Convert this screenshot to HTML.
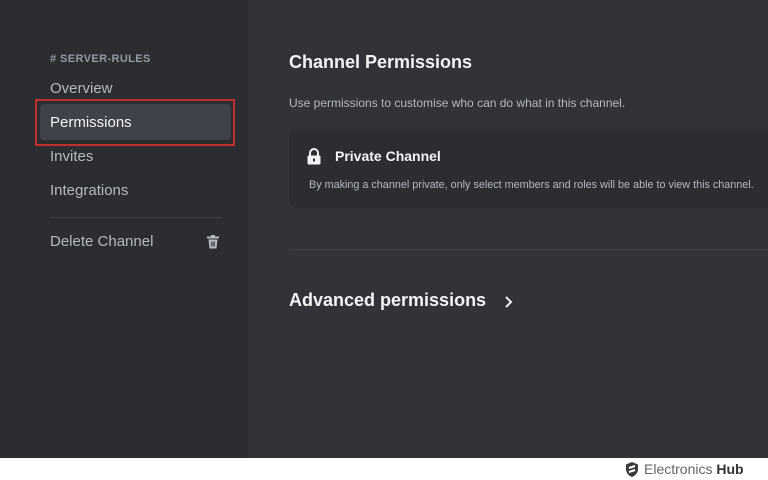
<!DOCTYPE html>
<html><head><style>
body{margin:0;width:768px;height:480px;overflow:hidden;font-family:"Liberation Sans",sans-serif;background:#fff;position:relative}
.side{position:absolute;left:0;top:0;width:248px;height:458px;background:#2b2d31}
.main{position:absolute;left:248px;top:0;width:520px;height:458px;background:#313338}
.t{position:absolute;white-space:nowrap}
</style></head><body>
<div class="side">
<div class="t" style="left:50px;top:53px;font-size:11px;font-weight:bold;color:#949ba4;letter-spacing:.4px">#&nbsp;SERVER-RULES</div>
<div class="t" style="left:50px;top:80px;font-size:15px;color:#b5bac1">Overview</div>
<div style="position:absolute;left:35px;top:99px;width:200px;height:47px;border:2px solid #c0302f;box-sizing:border-box"></div>
<div style="position:absolute;left:40px;top:104px;width:191px;height:36px;background:#404249;border-radius:4px"></div>
<div class="t" style="left:50px;top:114px;font-size:15px;color:#f2f3f5">Permissions</div>
<div class="t" style="left:50px;top:148px;font-size:15px;color:#b5bac1">Invites</div>
<div class="t" style="left:50px;top:182px;font-size:15px;color:#b5bac1">Integrations</div>
<div style="position:absolute;left:50px;top:217px;width:171px;height:1px;background:#3f4147"></div>
<div class="t" style="left:50px;top:233px;font-size:15px;color:#b5bac1">Delete Channel</div>
<svg style="position:absolute;left:207px;top:235px" width="12" height="14" viewBox="0 0 12 14"><rect x="0" y="1.5" width="12" height="2" fill="#b5bac1"/><rect x="4" y="0" width="4" height="2" fill="#b5bac1"/><path d="M1.5 4.5h9l-1 9h-7z" fill="#b5bac1"/><rect x="4.3" y="6.5" width="1.2" height="5" fill="#2b2d31"/><rect x="6.5" y="6.5" width="1.2" height="5" fill="#2b2d31"/></svg>
</div>
<div class="main">
<div class="t" style="left:41px;top:52px;font-size:18px;font-weight:bold;color:#f2f3f5">Channel Permissions</div>
<div class="t" style="left:41px;top:96px;font-size:12px;color:#b5bac1">Use permissions to customise who can do what in this channel.</div>
<div style="position:absolute;left:41px;top:129px;width:500px;height:79px;background:#2b2d31;border-radius:8px"></div>
<svg style="position:absolute;left:59px;top:148px" width="14" height="17" viewBox="0 0 14 17"><path d="M3 8V5a4 4 0 0 1 8 0v3" stroke="#f2f3f5" stroke-width="2" fill="none"/><rect x="0.5" y="7.5" width="13" height="9" rx="1.5" fill="#f2f3f5"/><rect x="6" y="10.5" width="2" height="3" fill="#2b2d31"/></svg>
<div class="t" style="left:87px;top:148px;font-size:14px;font-weight:bold;color:#f2f3f5">Private Channel</div>
<div class="t" style="left:61px;top:179px;font-size:10.8px;color:#b5bac1">By making a channel private, only select members and roles will be able to view this channel.</div>
<div style="position:absolute;left:41px;top:249px;width:479px;height:1px;background:#3f4147"></div>
<div class="t" style="left:41px;top:290px;font-size:18px;font-weight:bold;color:#f2f3f5">Advanced permissions</div>
<svg style="position:absolute;left:256px;top:295px" width="10" height="14" viewBox="0 0 10 14"><path d="M2 2l5 5-5 5" stroke="#f2f3f5" stroke-width="2" fill="none"/></svg>
</div>
<svg style="position:absolute;left:624px;top:461px" width="16" height="17" viewBox="0 0 16 17"><path d="M8 1L14 3.5V8c0 4-3 7-6 8C5 15 2 12 2 8V3.5z" fill="#3a3a3a"/><path d="M5 7l6-2M5 11l6-2" stroke="#fff" stroke-width="2"/></svg>
<div class="t" style="left:644px;top:461px;font-size:14px;color:#666">Electronics <b style="color:#333">Hub</b></div>
</body></html>
